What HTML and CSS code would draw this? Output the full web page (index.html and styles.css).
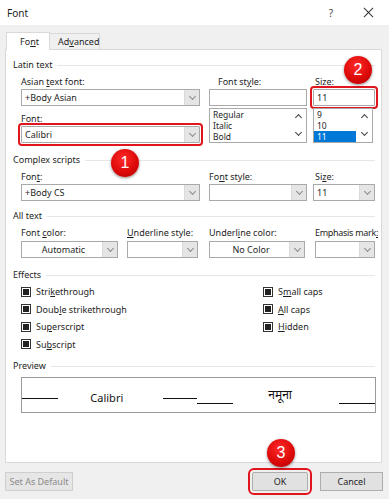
FILE: index.html
```html
<!DOCTYPE html>
<html lang="en">

<head>
    <meta charset="UTF-8">
    <meta name="viewport" content="width=device-width, initial-scale=1.0">
    <title>Font</title>
    <link rel="stylesheet" href="styles.css">
</head>

<body>
    <div class="titlebar">
        <span class="title">Font</span>
        <span class="help">?</span>
        <span class="close"></span>
    </div>

    <div class="tabs">
        <div class="tab activo">Fo<u>n</u>t</div>
        <div class="tab">Ad<u>v</u>anced</div>
    </div>

    <div class="panel">
        <!-- Latin text -->
        <div class="grupo">Latin text</div>
        <div class="fila">
            <div class="col c1">
                <label>Asian <u>t</u>ext font:</label>
                <div class="combo">+Body Asian<span class="drop"></span></div>
                <label class="sep"><u>F</u>ont:</label>
                <div class="combo marcado">Calibri<span class="drop"></span></div>
            </div>
            <div class="col c2">
                <label class="corrido">Font st<u>y</u>le:</label>
                <div class="caja"></div>
                <div class="lista">
                    <div>Regular</div>
                    <div>Italic</div>
                    <div>Bold</div>
                    <span class="flecha arriba"></span>
                    <span class="flecha abajo"></span>
                </div>
            </div>
            <div class="col c3">
                <label><u>S</u>ize:</label>
                <div class="caja marcado">11</div>
                <div class="lista chica">
                    <div>9</div>
                    <div>10</div>
                    <div class="sel">11</div>
                    <span class="flecha arriba"></span>
                    <span class="flecha abajo"></span>
                </div>
            </div>
        </div>

        <!-- Complex scripts -->
        <div class="grupo g-complex">Complex scripts</div>
        <div class="fila">
            <div class="col c1">
                <label>Fon<u>t</u>:</label>
                <div class="combo">+Body CS<span class="drop"></span></div>
            </div>
            <div class="col c2">
                <label>Fo<u>n</u>t style:</label>
                <div class="combo"><span class="drop"></span></div>
            </div>
            <div class="col c3">
                <label>Si<u>z</u>e:</label>
                <div class="combo">11<span class="drop"></span></div>
            </div>
        </div>

        <!-- All text -->
        <div class="grupo g-all">All text</div>
        <div class="fila todo">
            <div class="col a1">
                <label>Font <u>c</u>olor:</label>
                <div class="combo centro">Automatic<span class="drop"></span></div>
            </div>
            <div class="col a2">
                <label><u>U</u>nderline style:</label>
                <div class="combo"><span class="drop"></span></div>
            </div>
            <div class="col a3">
                <label>Underl<u>i</u>ne color:</label>
                <div class="combo centro">No Color<span class="drop"></span></div>
            </div>
            <div class="col a4">
                <label class="corta">Emphasis mark<u>:</u></label>
                <div class="combo"><span class="drop"></span></div>
            </div>
        </div>

        <!-- Effects -->
        <div class="grupo g-effects">Effects</div>
        <div class="efectos">
            <div class="col-efectos">
                <div class="check"><span class="cuadro"></span>Stri<u>k</u>ethrough</div>
                <div class="check"><span class="cuadro"></span>Doub<u>l</u>e strikethrough</div>
                <div class="check"><span class="cuadro"></span>Su<u>p</u>erscript</div>
                <div class="check"><span class="cuadro"></span>Su<u>b</u>script</div>
            </div>
            <div class="col-efectos">
                <div class="check"><span class="cuadro"></span>S<u>m</u>all caps</div>
                <div class="check"><span class="cuadro"></span><u>A</u>ll caps</div>
                <div class="check"><span class="cuadro"></span><u>H</u>idden</div>
            </div>
        </div>

        <!-- Preview -->
        <div class="grupo g-preview">Preview</div>
        <div class="preview">
            <span class="raya r1"></span>
            <span class="muestra latina">Calibri</span>
            <span class="raya r2"></span>
            <span class="raya r3"></span>
            <span class="muestra hindi">नमूना</span>
            <span class="raya r4"></span>
        </div>
    </div>

    <div class="botones">
        <div class="boton gris">Set As Default</div>
        <div class="boton ok marcado">OK</div>
        <div class="boton cancel">Cancel</div>
    </div>

    <span class="badge b1">1</span>
    <span class="badge b2">2</span>
    <span class="badge b3">3</span>
</body>

</html>
```

FILE: styles.css
```css
* {
    box-sizing: border-box;
}

body {
    margin: 0;
    width: 389px;
    height: 499px;
    overflow: hidden;
    position: relative;
    background-color: #f0f0f0;
    font-family: "Noto Sans", "Open Sans", sans-serif;
    font-size: 9px;
    color: #1e1e1e;
}

u {
    text-decoration-thickness: 1px;
    text-underline-offset: 1px;
}

/* barra de titulo */
.titlebar {
    height: 25px;
    background-color: #fff;
    display: flex;
    align-items: center;
    padding-left: 7px;
}

.title {
    flex: 1;
    font-size: 10px;
}

.help {
    font-size: 10px;
    color: #444;
    margin-right: 31px;
}

.close {
    width: 10px;
    height: 10px;
    margin-right: 15px;
    position: relative;
}

.close::before,
.close::after {
    content: "";
    position: absolute;
    left: 4px;
    top: -2px;
    width: 1px;
    height: 13px;
    background-color: #333;
    transform: rotate(45deg);
}

.close::after {
    transform: rotate(-45deg);
}

/* pestañas */
.tabs {
    display: flex;
    align-items: flex-end;
    padding: 7px 0 0 6px;
    height: 24px;
}

.tab {
    height: 16px;
    line-height: 15px;
    padding-left: 8px;
    border: 1px solid #d9d9d9;
    border-bottom: none;
    border-left: none;
}

.tab.activo {
    width: 44px;
    height: 18px;
    padding-left: 13px;
    background-color: #fff;
    border-left: 1px solid #d9d9d9;
    margin-bottom: -1px;
    position: relative;
    z-index: 1;
    line-height: 17px;
}

.tab:last-child {
    width: 50px;
}

/* panel blanco */
.panel {
    margin-left: 5px;
    width: 377px;
    height: 414px;
    background-color: #fff;
    border: 1px solid #d9d9d9;
    padding: 9px 6px 0 7px;
}

.grupo {
    display: flex;
    align-items: center;
    gap: 5px;
    height: 12px;
    line-height: 12px;
}

.grupo::after {
    content: "";
    flex: 1;
    border-top: 1px solid #e6e6e6;
}

.g-complex {
    margin-top: 11px;
}

.g-all {
    margin-top: 9px;
}

.g-effects {
    margin-top: 11px;
}

.g-preview {
    margin-top: 7px;
}

.fila {
    display: flex;
    margin: 5px 0 0 8px;
}

.col {
    display: flex;
    flex-direction: column;
    flex-shrink: 0;
}

.c1 {
    width: 179px;
}

.c2 {
    width: 98px;
    margin-left: 9px;
}

.c3 {
    width: 62px;
    margin-left: 6px;
}

.a1 {
    width: 97px;
}

.a2 {
    width: 71px;
    margin-left: 9px;
}

.a3 {
    width: 96px;
    margin-left: 11px;
}

.a4 {
    width: 60px;
    margin-left: 10px;
}

label {
    display: block;
    height: 12px;
    line-height: 12px;
    white-space: nowrap;
}

.c3 label {
    padding-left: 2px;
}

label.corrido {
    padding-left: 9px;
}

label.corta {
    letter-spacing: -0.3px;
}

label.sep {
    margin-top: 7px;
}

.combo,
.caja {
    height: 17px;
    margin-top: 1px;
    border: 1px solid #a9a9a9;
    background-color: #fff;
    line-height: 15px;
    padding-left: 3px;
    position: relative;
    white-space: nowrap;
}

.todo .combo {
    margin-top: 2px;
}

.combo.centro {
    text-align: center;
    padding-right: 15px;
}

.drop {
    position: absolute;
    right: 0;
    top: 0;
    width: 15px;
    height: 15px;
    background-color: #e5e5e5;
    border-left: 1px solid #dadada;
}

.drop::after {
    content: "";
    position: absolute;
    left: 5px;
    top: 4px;
    width: 4px;
    height: 4px;
    border-right: 1px solid #8a8a8a;
    border-bottom: 1px solid #8a8a8a;
    transform: rotate(45deg);
}

.marcado {
    outline: 2px solid #e0151d;
    outline-offset: 1px;
    border-radius: 1px;
}

.lista {
    position: relative;
    height: 35px;
    margin-top: 2px;
    border: 1px solid #a9a9a9;
    padding: 0 16px 0 3px;
    font-size: 8.5px;
    line-height: 11px;
    overflow: hidden;
}

.lista.chica {
    width: 60px;
    padding-left: 0;
}

.lista.chica div {
    padding-left: 3px;
}

.sel {
    background-color: #0078d7;
    color: #fff;
}

.flecha {
    position: absolute;
    right: 5px;
    width: 5px;
    height: 5px;
    border-left: 1px solid #444;
    border-top: 1px solid #444;
}

.flecha.arriba {
    top: 6px;
    transform: rotate(45deg);
}

.flecha.abajo {
    bottom: 7px;
    transform: rotate(225deg);
}

/* efectos */
.efectos {
    display: flex;
    margin: 2px 0 0 8px;
}

.col-efectos {
    width: 242px;
    flex-shrink: 0;
}

.col-efectos + .col-efectos {
    width: auto;
    flex: 1;
}

.check {
    height: 17.5px;
    display: flex;
    align-items: center;
}

.cuadro {
    width: 10px;
    height: 10px;
    border: 1px solid #333;
    padding: 1px;
    margin-right: 5px;
    background-color: #222;
    background-clip: content-box;
}

/* vista previa */
.preview {
    display: flex;
    align-items: flex-start;
    width: 355px;
    height: 36px;
    margin: 5px 0 0 8px;
    border: 1px solid #9a9a9a;
}

.raya {
    border-bottom: 1px solid #111;
}

.r1 {
    width: 37px;
    height: 21px;
}

.r2 {
    width: 35px;
    height: 21px;
    margin-left: 38px;
}

.r3 {
    width: 37px;
    height: 26px;
}

.r4 {
    width: 37px;
    height: 26px;
    margin-left: 38px;
}

.muestra {
    font-size: 11px;
    color: #111;
}

.latina {
    width: 35px;
    margin: 12px 0 0 32px;
}

.hindi {
    width: 33px;
    margin: 8px 0 0 35px;
    font-size: 12px;
}

/* botones de abajo */
.botones {
    display: flex;
    margin-top: 9px;
    padding: 0 6px 0 5px;
}

.boton {
    height: 19px;
    line-height: 17px;
    text-align: center;
    background-color: #e1e1e1;
    border: 1px solid #adadad;
}

.gris {
    width: 68px;
    color: #8a8a8a;
    border-color: #cfcfcf;
    background-color: #e6e6e6;
}

.ok {
    width: 56px;
    margin-left: auto;
    outline-width: 2px;
    outline-offset: 2px;
    border-radius: 2px;
}

.cancel {
    width: 63px;
    margin-left: 12px;
}

/* circulos numerados */
.badge {
    position: absolute;
    width: 28px;
    height: 28px;
    border-radius: 50%;
    background: radial-gradient(circle at 45% 35%, #ff2b2b 0%, #dd0a0a 55%, #b00000 100%);
    box-shadow: 0 1px 3px rgba(0, 0, 0, 0.45);
    color: #fff;
    font-family: "Liberation Sans", Arial, sans-serif;
    font-size: 16px;
    line-height: 28px;
    text-align: center;
}

.b1 {
    left: 111px;
    top: 149px;
}

.b2 {
    left: 344px;
    top: 56px;
}

.b3 {
    left: 267px;
    top: 439px;
}
```
